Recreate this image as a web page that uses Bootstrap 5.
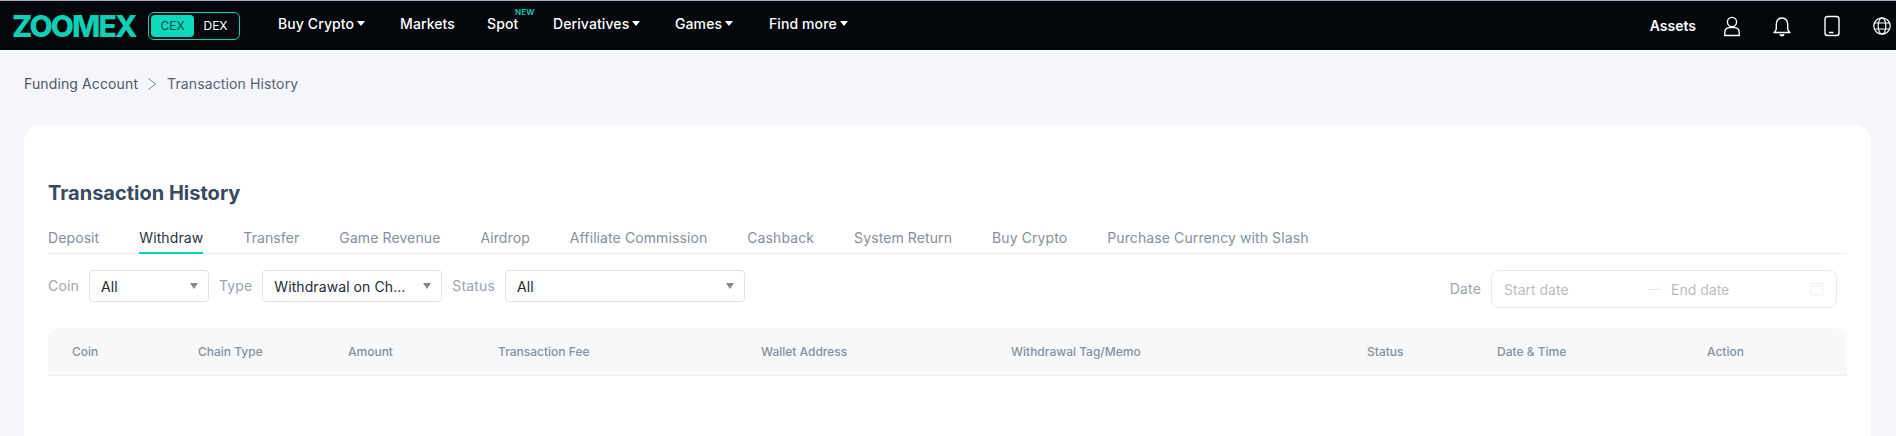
<!DOCTYPE html>
<html lang="en">
<head>
<meta charset="utf-8">
<title>Transaction History</title>
<link href="https://cdn.jsdelivr.net/npm/bootstrap@5.3.0/dist/css/bootstrap.min.css" rel="stylesheet">
<style>
html,body{height:436px;overflow:hidden}
body{background:#f5f6fb;font-family:Inter,"Liberation Sans",sans-serif;font-size:14px;color:#2f3b4c}
.topbar{height:50px;background:#03060b;border-top:1px solid #a3adbd;padding:0 5px 0 12px;color:#fff}
.brand-mark{font-size:30px;line-height:30px;font-weight:800;color:#10cfb5;letter-spacing:-1.9px;width:126px;margin-right:10px;white-space:nowrap}
.mode-switch{width:92px;height:28px;border:1px solid #0fd2b5;border-radius:6px;padding:2px;font-size:12px;margin-right:38px}
.mode-on,.mode-off{width:44px;height:22px;border-radius:4px;display:flex;align-items:center;justify-content:center}
.mode-on{background:#0cd8bb;color:#054a43}
.mode-off{color:#fff}
.menu-link{font-size:14px;font-weight:500;letter-spacing:.1px;color:#fff;white-space:nowrap;position:relative;display:flex;align-items:center;height:22px;margin-top:-4px}
.menu-caret{width:0;height:0;border-left:4px solid transparent;border-right:4px solid transparent;border-top:5.500px solid #fff;margin-left:3px;margin-top:-1px}
.m1{width:122px}.m2{width:87px}.m3{width:66px}.m4{width:122px}.m5{width:94px}.m6{width:86px}
.new-tag{position:absolute;left:28px;top:-6px;font-size:8px;line-height:10px;font-weight:600;color:#10cfb5;letter-spacing:.2px}
.assets-link{font-size:14px;font-weight:600;color:#fff;margin-right:27px;margin-top:-1px}
.top-icon{width:18px;height:22px;margin-right:32px;flex:none}
.top-icon:last-child{margin-right:0}
.crumbs{height:75px;padding:0 0 8px 24px;font-size:14px;letter-spacing:.12px;color:#4b5563}
.crumb-now{color:#566275;margin-left:1px}
.panel{margin:0 25px 0 24px;background:#fff;border-radius:16px;height:500px;padding:56px 24px 0 24px}
.panel-title{font-size:20px;line-height:24px;font-weight:700;color:#3a4a5e;margin:0 0 24px}
.tab-row{border-bottom:1px solid #e9ecf0;height:25px;gap:40px;margin-bottom:16px}
.tab-item{font-size:14px;line-height:17px;letter-spacing:.1px;color:#84919f;height:25px;white-space:nowrap}
.tab-on{color:#2a3441;border-bottom:2px solid #0cd2bb}
.filter-row{height:38px;margin-bottom:20px}
.filter-label{font-size:14px;letter-spacing:.16px;color:#9aa5b1;margin-right:10px;line-height:32px}
.filter-box{height:32px;border:1px solid #dfe2e7;border-radius:4px;padding:0 11px;margin-right:10px;font-size:14px;letter-spacing:.08px;color:#222c3a;background:#fff;white-space:nowrap}
.fb1{width:120px}.fb2{width:180px}.fb3{width:240px}
.box-caret{width:0;height:0;border-left:4px solid transparent;border-right:4px solid transparent;border-top:6px solid #7f8893;margin-right:-1px}
.date-box{width:346px;height:38px;border:1px solid #e7eaf0;border-radius:8px;padding:0 12px;margin-right:10px;font-size:14px;color:#bdbdbd}
.date-start{width:144px}
.date-end{margin-left:11px}
.date-label{margin-right:10px;line-height:38px;color:#9aa5b1}
table.log-table{width:1799px;table-layout:fixed;margin:0}
.log-table th{background:#f7f8fa;height:47px;padding:1px 0 0 24px;font-size:12px;font-weight:500;color:#84919f;vertical-align:middle;border-bottom:1px solid #eff1f4;white-space:nowrap;box-sizing:border-box}
.log-table th:first-child{border-top-left-radius:12px}
.log-table th:last-child{border-top-right-radius:12px}
.c1{width:126px}.c2,.c3{width:150px}.c4{width:263px}.c5{width:250px}.c6{width:356px}.c7{width:130px}.c8{width:210px}.c9{width:164px}
</style>
</head>
<body>
<nav class="topbar d-flex align-items-center">
  <div class="brand-mark">ZOOMEX</div>
  <div class="mode-switch d-flex"><span class="mode-on">CEX</span><span class="mode-off">DEX</span></div>
  <a class="menu-link m1 text-decoration-none" href="#">Buy Crypto<i class="menu-caret"></i></a>
  <a class="menu-link m2 text-decoration-none" href="#">Markets</a>
  <a class="menu-link m3 text-decoration-none" href="#">Spot<span class="new-tag">NEW</span></a>
  <a class="menu-link m4 text-decoration-none" href="#">Derivatives<i class="menu-caret"></i></a>
  <a class="menu-link m5 text-decoration-none" href="#">Games<i class="menu-caret"></i></a>
  <a class="menu-link m6 text-decoration-none" href="#">Find more<i class="menu-caret"></i></a>
  <div class="ms-auto d-flex align-items-center">
    <a class="assets-link text-decoration-none" href="#">Assets</a>
    <svg class="top-icon" viewBox="0 0 18 22" fill="none" stroke="#fff" stroke-width="1.4"><circle cx="9" cy="7" r="4.600"/><path d="M1.800 20.500v-3c0-3 2.200-5 5-5h4.400c2.800 0 5 2 5 5v3z" stroke-linejoin="round"/></svg>
    <svg class="top-icon" viewBox="0 0 18 22" fill="none" stroke="#fff" stroke-width="1.4" stroke-linejoin="round"><path d="M9 3c-3.600 0-5.700 2.700-5.700 6.200v4.300c0 1.500-1 2.900-2.200 4h15.800c-1.200-1.100-2.200-2.500-2.200-4V9.200C14.700 5.700 12.600 3 9 3z"/><path d="M7 19.300c.4 1.100 1.100 1.500 2 1.500s1.600-.4 2-1.500" fill="#fff"/></svg>
    <svg class="top-icon" viewBox="0 0 18 22" fill="none" stroke="#fff" stroke-width="1.4"><rect x="2" y="1.500" width="14" height="19" rx="2.500"/><path d="M6 17.500h4.500" stroke-width="1.500"/></svg>
    <svg class="top-icon" viewBox="0 0 18 22" fill="none" stroke="#fff" stroke-width="1.2"><circle cx="9" cy="11" r="8.200"/><ellipse cx="9" cy="11" rx="3.800" ry="8.200"/><path d="M1.500 8h15M1.500 14h15"/></svg>
  </div>
</nav>
<div class="crumbs d-flex align-items-center">
  <span>Funding Account</span>
  <svg class="mx-2" width="12" height="14" viewBox="0 0 12 14" fill="none" stroke="#7c8794" stroke-width="1"><path d="M2.500 1.500l7 5.500-7 5.500"/></svg>
  <span class="crumb-now">Transaction History</span>
</div>
<main class="panel">
  <h1 class="panel-title">Transaction History</h1>
  <div class="tab-row d-flex">
    <span class="tab-item">Deposit</span>
    <span class="tab-item tab-on">Withdraw</span>
    <span class="tab-item">Transfer</span>
    <span class="tab-item">Game Revenue</span>
    <span class="tab-item">Airdrop</span>
    <span class="tab-item">Affiliate Commission</span>
    <span class="tab-item">Cashback</span>
    <span class="tab-item">System Return</span>
    <span class="tab-item">Buy Crypto</span>
    <span class="tab-item">Purchase Currency with Slash</span>
  </div>
  <div class="filter-row d-flex">
    <span class="filter-label">Coin</span>
    <div class="filter-box fb1 d-flex align-items-center justify-content-between"><span>All</span><i class="box-caret"></i></div>
    <span class="filter-label">Type</span>
    <div class="filter-box fb2 d-flex align-items-center justify-content-between"><span>Withdrawal on Ch...</span><i class="box-caret"></i></div>
    <span class="filter-label">Status</span>
    <div class="filter-box fb3 d-flex align-items-center justify-content-between"><span>All</span><i class="box-caret"></i></div>
    <span class="filter-label date-label ms-auto">Date</span>
    <div class="date-box d-flex align-items-center">
      <span class="date-start">Start date</span>
      <svg width="12" height="8" viewBox="0 0 12 8" fill="none" stroke="#e3e5e8"><path d="M0 4.500h11.500M9 2.500l2.500 2"/></svg>
      <span class="date-end">End date</span>
      <svg class="ms-auto" width="14" height="14" viewBox="0 0 14 14" fill="none" stroke="#eeeff1"><rect x=".5" y="1.500" width="12.500" height="11.500"/><path d="M.5 4.500h12.500M4 0v3M10 0v3"/></svg>
    </div>
  </div>
  <table class="log-table">
    <thead><tr>
      <th class="c1">Coin</th><th class="c2">Chain Type</th><th class="c3">Amount</th><th class="c4">Transaction Fee</th><th class="c5">Wallet Address</th><th class="c6">Withdrawal Tag/Memo</th><th class="c7">Status</th><th class="c8">Date &amp; Time</th><th class="c9">Action</th>
    </tr></thead>
  </table>
</main>
<script src="https://cdn.jsdelivr.net/npm/bootstrap@5.3.0/dist/js/bootstrap.bundle.min.js"></script>
</body>
</html>
